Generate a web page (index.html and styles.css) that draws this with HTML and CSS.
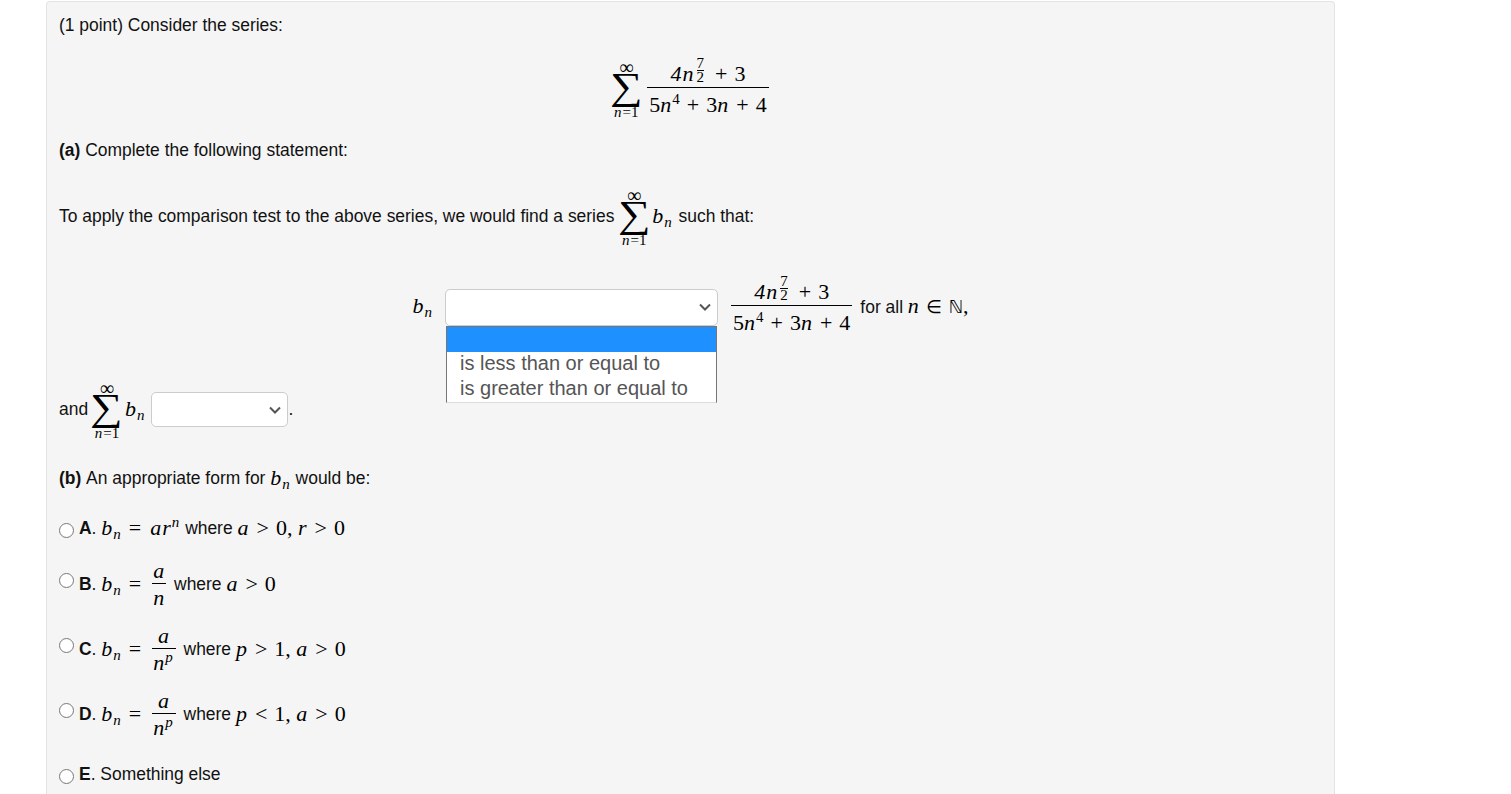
FILE: index.html
```html
<!DOCTYPE html>
<html lang="en">
<head>
    <meta charset="UTF-8">
    <title>Comparison test</title>
    <link rel="stylesheet" href="styles.css">
</head>

<body>
    <div class="problem">
        <div class="line">(1 point) Consider the series:</div>

        <!-- series -->
        <div class="line display first-display">
            <span class="sum"><span class="lim-top">∞</span><span class="sigma">∑</span><span class="lim-bot"><i>n</i>=1</span></span>
            <span class="frac">
                <span class="num"><i>4n</i><span class="exp-frac"><span class="exp-top">7</span><span>2</span></span><span class="op">+</span>3</span>
                <span class="den">5<i>n</i><sup>4</sup><span class="op">+</span>3<i>n</i><span class="op">+</span>4</span>
            </span>
        </div>

        <div class="line part-a"><b>(a)</b>&nbsp;Complete the following statement:</div>

        <div class="line apply">
            To apply the comparison test to the above series, we would find a series&nbsp;
            <span class="sum"><span class="lim-top">∞</span><span class="sigma">∑</span><span class="lim-bot"><i>n</i>=1</span></span>
            <span class="math b-gap"><i>b<sub>n</sub></i></span>&nbsp;such that:
        </div>

        <div class="line display second-display">
            <span class="math"><i>b<sub>n</sub></i></span>
            <span class="select-wrap">
                <select class="select-big"><option></option></select>
                <!-- open dropdown -->
                <span class="dropdown">
                    <span class="opt-selected"></span>
                    <span class="opt">is less than or equal to</span>
                    <span class="opt">is greater than or equal to</span>
                </span>
            </span>
            <span class="frac">
                <span class="num"><i>4n</i><span class="exp-frac"><span class="exp-top">7</span><span>2</span></span><span class="op">+</span>3</span>
                <span class="den">5<i>n</i><sup>4</sup><span class="op">+</span>3<i>n</i><span class="op">+</span>4</span>
            </span>
            <span class="for-all">for all <span class="math"><i>n</i> <span class="op-in">∈</span> <span class="nat">ℕ</span>,</span></span>
        </div>

        <div class="line and-row">
            and&nbsp;
            <span class="sum"><span class="lim-top">∞</span><span class="sigma">∑</span><span class="lim-bot"><i>n</i>=1</span></span>
            <span class="math b-gap"><i>b<sub>n</sub></i></span>
            <select class="select-small"><option></option></select>.
        </div>

        <div class="line part-b"><b>(b)</b>&nbsp;An appropriate form for&nbsp;<span class="math"><i>b<sub>n</sub></i></span>&nbsp;would be:</div>

        <div class="line choice choice-a">
            <input type="radio" name="form" class="radio">
            <b>A</b>.&nbsp;<span class="math"><i>b<sub>n</sub></i><span class="eq">=</span><i>ar<sup>n</sup></i></span>&nbsp;where&nbsp;<span class="math"><i>a</i><span class="op">&gt;</span>0, <i>r</i><span class="op">&gt;</span>0</span>
        </div>

        <div class="line choice choice-b">
            <input type="radio" name="form" class="radio radio-up">
            <b>B</b>.&nbsp;<span class="math"><i>b<sub>n</sub></i><span class="eq">=</span></span>
            <span class="frac small-frac"><span class="num"><i>a</i></span><span class="den"><i>n</i></span></span>
            &nbsp;where&nbsp;<span class="math"><i>a</i><span class="op">&gt;</span>0</span>
        </div>

        <div class="line choice choice-c">
            <input type="radio" name="form" class="radio radio-up">
            <b>C</b>.&nbsp;<span class="math"><i>b<sub>n</sub></i><span class="eq">=</span></span>
            <span class="frac small-frac"><span class="num"><i>a</i></span><span class="den"><i>n<sup>p</sup></i></span></span>
            &nbsp;where&nbsp;<span class="math"><i>p</i><span class="op">&gt;</span>1, <i>a</i><span class="op">&gt;</span>0</span>
        </div>

        <div class="line choice choice-d">
            <input type="radio" name="form" class="radio radio-up">
            <b>D</b>.&nbsp;<span class="math"><i>b<sub>n</sub></i><span class="eq">=</span></span>
            <span class="frac small-frac"><span class="num"><i>a</i></span><span class="den"><i>n<sup>p</sup></i></span></span>
            &nbsp;where&nbsp;<span class="math"><i>p</i><span class="op">&lt;</span>1, <i>a</i><span class="op">&gt;</span>0</span>
        </div>

        <div class="line choice choice-e">
            <input type="radio" name="form" class="radio">
            <b>E</b>.&nbsp;Something else
        </div>
    </div>
</body>
</html>
```

FILE: styles.css
```css
html, body {
    height: 100%;
    overflow: hidden;
}
body {
    margin: 0;
    padding: 1px 176px 0 46px;
    font-family: "Liberation Sans", Arial, sans-serif;
    font-size: 17.45px;
    color: #111;
}

.problem {
    height: 793px;
    box-sizing: border-box;
    overflow: hidden;
    padding: 12px 12px 0 12px;
    background-color: #f5f5f5;
    border: 1px solid #e3e3e3;
    border-bottom: 0;
    border-radius: 4px 4px 0 0;
}

.line {
    display: flex;
    align-items: center;
    height: 22px;
    white-space: nowrap;
}
.display {
    justify-content: center;
    height: 60px;
}

/* 세로 간격 */
.first-display { margin-top: 22px; }
.part-a { margin-top: 21px; }
.apply { margin-top: 26px; height: 58px; }
.second-display { margin-top: 31px; }
.and-row { margin-top: 43px; height: 60px; }
.part-b { margin-top: 28px; }
.choice-a { margin-top: 28px; }
.choice-b { margin-top: 22px; height: 46px; }
.choice-c { margin-top: 18px; height: 48px; }
.choice-d { margin-top: 17px; height: 48px; }
.choice-e { margin-top: 25px; }

/* 수식 */
.math, .frac, .sum {
    font-family: "Liberation Serif", "Times New Roman", serif;
    font-size: 22px;
    color: #000;
}
.math i, .frac i, .sum i {
    letter-spacing: 1px;
}
sup {
    font-size: 15px;
    line-height: 0;
}
sub {
    font-size: 15px;
    line-height: 0;
    vertical-align: -4px;
}
.op {
    margin: 0 7px;
}
.eq {
    margin: 0 9px 0 7px;
}
.op-in, .nat {
    font-family: "DejaVu Sans", sans-serif;
    font-size: 18px;
}
.op-in {
    margin: 0 1px;
}

.sum {
    display: inline-flex;
    flex-direction: column;
    align-items: center;
    width: 28px;
    margin-top: 4px;
    line-height: 1;
}
.apply .sum {
    margin-left: 1px;
}
.sigma {
    font-size: 38px;
    line-height: 24px;
    height: 29px;
    transform: scaleX(1.2);
}
.lim-top {
    font-size: 20px;
    line-height: 14px;
}
.lim-bot {
    margin-top: 2px;
    font-size: 15px;
    line-height: 15px;
}

.frac {
    display: inline-flex;
    flex-direction: column;
    align-items: center;
    margin: 0 0 0 7px;
}
.num {
    display: flex;
    align-items: flex-end;
    justify-content: center;
    box-sizing: border-box;
    height: 29px;
    line-height: 24px;
    padding-bottom: 1px;
}
.den {
    align-self: stretch;
    box-sizing: border-box;
    height: 31px;
    text-align: center;
    line-height: 26px;
    border-top: 1px solid #000;
    padding: 4px 2px 0 2px;
}
.exp-frac {
    display: inline-flex;
    flex-direction: column;
    align-items: center;
    font-size: 15px;
    line-height: 13px;
    margin: 0 4px 2px 2px;
}
.exp-top {
    border-bottom: 1px solid #000;
    margin-top: -2px;
}
.for-all {
    margin-left: 8px;
}

.small-frac {
    margin: 0 3px 0 2px;
}
.small-frac .num {
    height: 23px;
    line-height: 22px;
}
.small-frac .den {
    height: 25px;
    line-height: 24px;
    padding: 2px 1px 0 1px;
}
.choice-c .den, .choice-d .den {
    padding-right: 2px;
}

.b-gap {
    margin: 0 1px 0 4px;
}

/* 셀렉트 */
select {
    appearance: none;
    background-color: #fff;
    background-image: url("data:image/svg+xml,%3Csvg xmlns='http://www.w3.org/2000/svg' width='12' height='8' viewBox='0 0 12 8'%3E%3Cpath d='M1 1.5l5 5 5-5' fill='none' stroke='%23555' stroke-width='2'/%3E%3C/svg%3E");
    background-repeat: no-repeat;
    background-position: right 6px center;
    border: 1px solid #ccc;
    border-radius: 5px;
    font-size: 17.6px;
    font-family: inherit;
    color: #555;
    padding: 0;
}
.select-wrap {
    position: relative;
    display: inline-flex;
    margin: 0 6px 0 12px;
}
.select-big {
    width: 273px;
    height: 37px;
    margin-top: 2px;
}
.select-small {
    width: 137px;
    height: 35px;
    margin: 1px 0 0 5px;
}

.dropdown {
    position: absolute;
    left: 1px;
    top: 39px;
    box-sizing: border-box;
    width: 271px;
    height: 77px;
    overflow: hidden;
    display: block;
    background-color: #fff;
    border: 1px solid #767676;
    border-bottom: 1px solid #ddd;
    font-size: 20px;
    color: #555;
}
.opt-selected {
    display: block;
    height: 25px;
    background-color: #1e90ff;
}
.opt {
    display: block;
    height: 25px;
    line-height: 23px;
    padding-left: 13px;
}

/* 라디오 */
.radio {
    width: 15px;
    height: 15px;
    margin: 4px 5px 0 0;
    accent-color: #767676;
}
.radio-up {
    margin-top: 0;
    margin-bottom: 8px;
}
```
